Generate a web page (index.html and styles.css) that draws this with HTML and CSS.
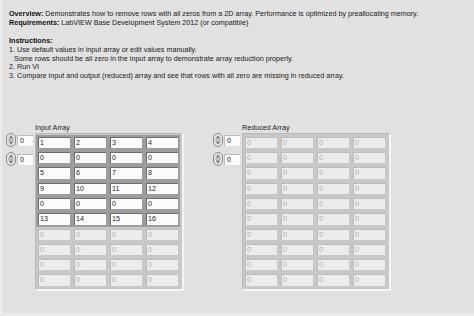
FILE: index.html
```html
<!DOCTYPE html>
<html>
<head>
<meta charset="utf-8">
<link rel="stylesheet" href="styles.css">
</head>
<body>
<div class="page">
  <div class="desc">
    <div><b>Overview:</b> Demonstrates how to remove rows with all zeros from a 2D array. Performance is optimized by preallocating memory.</div>
    <div><b>Requirements:</b> LabVIEW Base Development System 2012 (or compatible)</div>
    <div class="blank">&nbsp;</div>
    <div><b>Instructions:</b></div>
    <div>1. Use default values in input array or edit values manually.</div>
    <div class="indent">Some rows should be all zero in the input array to demonstrate array reduction properly.</div>
    <div>2. Run VI</div>
    <div>3. Compare input and output (reduced) array and see that rows with all zero are missing in reduced array.</div>
  </div>

  <div class="arrays">
    <div class="group">
      <div class="label">Input Array</div>
      <div class="indices">
        <div class="index"><svg class="spin" viewBox="0 0 10 14" width="10" height="14"><rect x="0.5" y="0.5" width="9" height="13" rx="4.5" fill="#e4e4e4" stroke="#8c8c8c"/><line x1="2" y1="7" x2="8" y2="7" stroke="#9a9a9a"/><path d="M5 2.2 L7.3 5.6 H2.7 Z" fill="#7a7a7a"/><path d="M5 11.8 L7.3 8.4 H2.7 Z" fill="#7a7a7a"/></svg><span class="ibox">0</span></div>
        <div class="index"><svg class="spin" viewBox="0 0 10 14" width="10" height="14"><rect x="0.5" y="0.5" width="9" height="13" rx="4.5" fill="#e4e4e4" stroke="#8c8c8c"/><line x1="2" y1="7" x2="8" y2="7" stroke="#9a9a9a"/><path d="M5 2.2 L7.3 5.6 H2.7 Z" fill="#7a7a7a"/><path d="M5 11.8 L7.3 8.4 H2.7 Z" fill="#7a7a7a"/></svg><span class="ibox">0</span></div>
      </div>
      <div class="frame">
        <span class="cell">1</span><span class="cell">2</span><span class="cell">3</span><span class="cell">4</span>
        <span class="cell">0</span><span class="cell">0</span><span class="cell">0</span><span class="cell">0</span>
        <span class="cell">5</span><span class="cell">6</span><span class="cell">7</span><span class="cell">8</span>
        <span class="cell">9</span><span class="cell">10</span><span class="cell">11</span><span class="cell">12</span>
        <span class="cell">0</span><span class="cell">0</span><span class="cell">0</span><span class="cell">0</span>
        <span class="cell">13</span><span class="cell">14</span><span class="cell">15</span><span class="cell">16</span>
        <span class="cell off">0</span><span class="cell off">0</span><span class="cell off">0</span><span class="cell off">0</span>
        <span class="cell off">0</span><span class="cell off">0</span><span class="cell off">0</span><span class="cell off">0</span>
        <span class="cell off">0</span><span class="cell off">0</span><span class="cell off">0</span><span class="cell off">0</span>
        <span class="cell off">0</span><span class="cell off">0</span><span class="cell off">0</span><span class="cell off">0</span>
      </div>
    </div>

    <div class="group second">
      <div class="label">Reduced Array</div>
      <div class="indices">
        <div class="index"><svg class="spin" viewBox="0 0 10 14" width="10" height="14"><rect x="0.5" y="0.5" width="9" height="13" rx="4.5" fill="#e4e4e4" stroke="#8c8c8c"/><line x1="2" y1="7" x2="8" y2="7" stroke="#9a9a9a"/><path d="M5 2.2 L7.3 5.6 H2.7 Z" fill="#7a7a7a"/><path d="M5 11.8 L7.3 8.4 H2.7 Z" fill="#7a7a7a"/></svg><span class="ibox">0</span></div>
        <div class="index"><svg class="spin" viewBox="0 0 10 14" width="10" height="14"><rect x="0.5" y="0.5" width="9" height="13" rx="4.5" fill="#e4e4e4" stroke="#8c8c8c"/><line x1="2" y1="7" x2="8" y2="7" stroke="#9a9a9a"/><path d="M5 2.2 L7.3 5.6 H2.7 Z" fill="#7a7a7a"/><path d="M5 11.8 L7.3 8.4 H2.7 Z" fill="#7a7a7a"/></svg><span class="ibox">0</span></div>
      </div>
      <div class="frame">
        <span class="cell off">0</span><span class="cell off">0</span><span class="cell off">0</span><span class="cell off">0</span>
        <span class="cell off">0</span><span class="cell off">0</span><span class="cell off">0</span><span class="cell off">0</span>
        <span class="cell off">0</span><span class="cell off">0</span><span class="cell off">0</span><span class="cell off">0</span>
        <span class="cell off">0</span><span class="cell off">0</span><span class="cell off">0</span><span class="cell off">0</span>
        <span class="cell off">0</span><span class="cell off">0</span><span class="cell off">0</span><span class="cell off">0</span>
        <span class="cell off">0</span><span class="cell off">0</span><span class="cell off">0</span><span class="cell off">0</span>
        <span class="cell off">0</span><span class="cell off">0</span><span class="cell off">0</span><span class="cell off">0</span>
        <span class="cell off">0</span><span class="cell off">0</span><span class="cell off">0</span><span class="cell off">0</span>
        <span class="cell off">0</span><span class="cell off">0</span><span class="cell off">0</span><span class="cell off">0</span>
        <span class="cell off">0</span><span class="cell off">0</span><span class="cell off">0</span><span class="cell off">0</span>
      </div>
    </div>
  </div>
</div>
</body>
</html>
```

FILE: styles.css
```css
html, body {
  margin: 0;
  padding: 0;
}
body {
  width: 474px;
  height: 316px;
  background: #e1e1e1;
  overflow: hidden;
}
.page {
  box-sizing: border-box;
  width: 474px;
  height: 316px;
  border-left: 2px solid #ececec;
  border-bottom: 3px solid #ebebeb;
  font-family: "Liberation Sans", Arial, sans-serif;
  font-size: 7.2px;
  color: #1a1a1a;
}
.desc {
  padding: 10px 0 0 7px;
  line-height: 8.9px;
  white-space: nowrap;
}
.desc b {
  font-weight: bold;
  color: #111;
}
.indent {
  padding-left: 5px;
}
.arrays {
  display: flex;
  align-items: flex-start;
  margin-top: 43px;
  padding-left: 4px;
}
.group {
  display: grid;
  grid-template-columns: 27px auto;
  column-gap: 2px;
}
.group.second {
  margin-left: 30px;
}
.label {
  grid-column: 2;
  grid-row: 1;
  height: 9px;
  line-height: 8px;
  color: #222;
  padding-left: 0;
}
.indices {
  grid-column: 1;
  grid-row: 2;
  display: flex;
  flex-direction: column;
  gap: 5px;
}
.index {
  display: flex;
  align-items: center;
  height: 14px;
}
.spin {
  display: block;
  flex: none;
}
.ibox {
  box-sizing: border-box;
  width: 16px;
  height: 11px;
  margin-left: 1px;
  background: #fbfbfb;
  border-top: 1px solid #bdbdbd;
  border-left: 1px solid #bdbdbd;
  padding-left: 2px;
  line-height: 10px;
  color: #222;
}
.frame {
  grid-column: 2;
  grid-row: 2;
  box-sizing: border-box;
  width: 148px;
  display: grid;
  grid-template-columns: repeat(4, 36px);
  grid-auto-rows: 15.3px;
  padding: 0.5px 2px 1px 0;
  background: #c9c9c9;
  border: 1px solid;
  border-color: #b9b9b9 #f6f6f6 #f6f6f6 #b9b9b9;
  box-shadow: 1px 1px 0 #f3f3f3;
}
.cell {
  box-sizing: border-box;
  border: 2px solid #9d9d9d;
  background: #fbfbfb;
  box-shadow: inset 1px 1px 0 #6c6c6c;
  padding-left: 2px;
  line-height: 11px;
  color: #1e1e1e;
  overflow: hidden;
}
.cell.off {
  border-color: #c8c8c8;
  background: #ececec;
  box-shadow: inset 1px 1px 0 #bcbcbc;
  color: #b2b2b2;
}
```
